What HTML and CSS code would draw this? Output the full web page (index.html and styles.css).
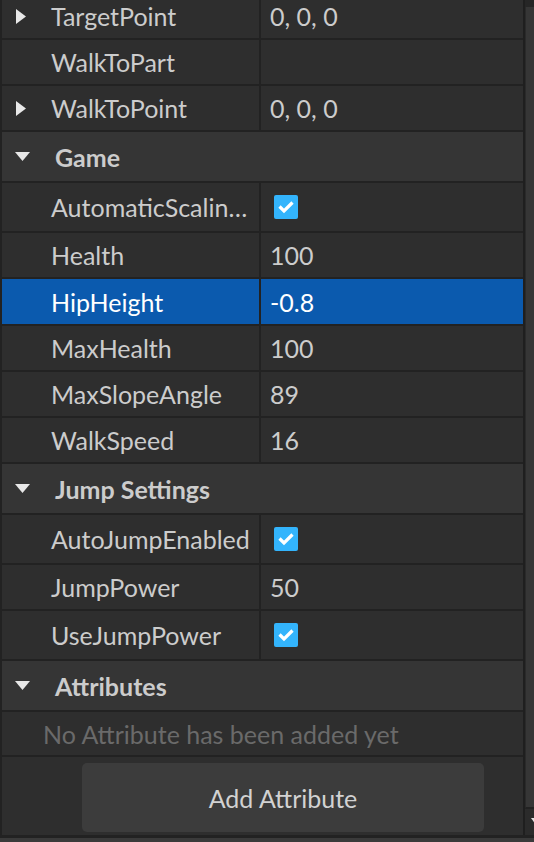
FILE: index.html
```html
<!DOCTYPE html>
<html>
<head>
<meta charset="utf-8">
<link rel="stylesheet" href="styles.css">
</head>
<body>
<div class="frame">
  <div class="main">
    <div class="list">
      <div class="row">
        <div class="name"><span class="expander"><svg width="10" height="15" viewBox="0 0 10 15"><polygon points="0,0 10,7.5 0,15" fill="#e8e8e8"/></svg></span>TargetPoint</div>
        <div class="value">0, 0, 0</div>
      </div>
      <div class="row">
        <div class="name"><span class="expander"></span>WalkToPart</div>
        <div class="value"></div>
      </div>
      <div class="row">
        <div class="name"><span class="expander"><svg width="10" height="15" viewBox="0 0 10 15"><polygon points="0,0 10,7.5 0,15" fill="#e8e8e8"/></svg></span>WalkToPoint</div>
        <div class="value">0, 0, 0</div>
      </div>

      <div class="header">
        <span class="caret"><svg width="15" height="9" viewBox="0 0 15 9"><polygon points="0,0 15,0 7.5,9" fill="#e8e8e8"/></svg></span>Game
      </div>
      <div class="row tall">
        <div class="name"><span class="expander"></span>AutomaticScalin…</div>
        <div class="value"><span class="check"><svg width="24" height="24" viewBox="0 0 24 24"><rect x="0" y="0" width="24" height="24" rx="2" fill="#33b4fc"/><polyline points="5.5,11.5 10,16 18.5,7.5" fill="none" stroke="#ffffff" stroke-width="3.2"/></svg></span></div>
      </div>
      <div class="row">
        <div class="name"><span class="expander"></span>Health</div>
        <div class="value">100</div>
      </div>
      <div class="row selected">
        <div class="name"><span class="expander"></span>HipHeight</div>
        <div class="value">-0.8</div>
      </div>
      <div class="row">
        <div class="name"><span class="expander"></span>MaxHealth</div>
        <div class="value">100</div>
      </div>
      <div class="row">
        <div class="name"><span class="expander"></span>MaxSlopeAngle</div>
        <div class="value">89</div>
      </div>
      <div class="row">
        <div class="name"><span class="expander"></span>WalkSpeed</div>
        <div class="value">16</div>
      </div>

      <div class="header">
        <span class="caret"><svg width="15" height="9" viewBox="0 0 15 9"><polygon points="0,0 15,0 7.5,9" fill="#e8e8e8"/></svg></span>Jump Settings
      </div>
      <div class="row tall">
        <div class="name"><span class="expander"></span>AutoJumpEnabled</div>
        <div class="value"><span class="check"><svg width="24" height="24" viewBox="0 0 24 24"><rect x="0" y="0" width="24" height="24" rx="2" fill="#33b4fc"/><polyline points="5.5,11.5 10,16 18.5,7.5" fill="none" stroke="#ffffff" stroke-width="3.2"/></svg></span></div>
      </div>
      <div class="row">
        <div class="name"><span class="expander"></span>JumpPower</div>
        <div class="value">50</div>
      </div>
      <div class="row tall">
        <div class="name"><span class="expander"></span>UseJumpPower</div>
        <div class="value"><span class="check"><svg width="24" height="24" viewBox="0 0 24 24"><rect x="0" y="0" width="24" height="24" rx="2" fill="#33b4fc"/><polyline points="5.5,11.5 10,16 18.5,7.5" fill="none" stroke="#ffffff" stroke-width="3.2"/></svg></span></div>
      </div>

      <div class="header">
        <span class="caret"><svg width="15" height="9" viewBox="0 0 15 9"><polygon points="0,0 15,0 7.5,9" fill="#e8e8e8"/></svg></span>Attributes
      </div>
      <div class="empty">No Attribute has been added yet</div>
      <div class="actions">
        <div class="button">Add Attribute</div>
      </div>
    </div>
  </div>
  <div class="scrollbar">
    <div class="sb-top"></div>
    <div class="sb-thumb"></div>
    <div class="sb-arrow"><svg width="10" height="8" viewBox="0 0 10 8"><polygon points="0,0 10,0 5,7" fill="#e0e0e0"/></svg></div>
  </div>
</div>
<div class="footer"></div>
</body>
</html>
```
FILE: styles.css
```css
html, body {
  margin: 0;
  padding: 0;
  background: #2e2e2e;
}
body {
  width: 534px;
  height: 842px;
  overflow: hidden;
  font-family: Lato, "Liberation Sans", sans-serif;
  font-size: 25px;
  color: #cccccc;
  display: flex;
  flex-direction: column;
}
.frame {
  display: flex;
  height: 835px;
  overflow: hidden;
}
.main {
  width: 521px;
  border-left: 2px solid #222222;
  overflow: hidden;
}
.list {
  margin-top: -6px;
  display: flex;
  flex-direction: column;
}
.row {
  display: flex;
  height: 44px;
  border-bottom: 2px solid #222222;
  background: #2e2e2e;
}
.row.tall {
  height: 48px;
}
.row.selected {
  background: #0b5aae;
  color: #ffffff;
  height: 45px;
}
.name {
  width: 257px;
  border-right: 2px solid #222222;
  display: flex;
  align-items: center;
  white-space: nowrap;
  overflow: hidden;
}
.expander {
  width: 49px;
  flex: none;
  display: flex;
  align-items: center;
  padding-left: 14px;
  box-sizing: border-box;
}
.expander svg {
  display: block;
}
.value {
  flex: 1;
  display: flex;
  align-items: center;
  padding-left: 9px;
}
.check svg {
  display: block;
  margin-left: 4px;
}
.header {
  height: 49px;
  border-bottom: 2px solid #222222;
  background: #353535;
  display: flex;
  align-items: center;
  font-weight: bold;
  color: #cccccc;
}
.caret {
  width: 53px;
  flex: none;
  padding-left: 13px;
  box-sizing: border-box;
  display: flex;
  align-items: center;
}
.caret svg {
  display: block;
}
.empty {
  height: 43px;
  border-bottom: 2px solid #222222;
  display: flex;
  align-items: center;
  padding-left: 41px;
  color: #6a6a6a;
}
.actions {
  padding: 6px 0 2px 80px;
}
.button {
  width: 402px;
  height: 69px;
  border-radius: 5px;
  background: #3c3c3c;
  color: #d2d2d2;
  display: flex;
  align-items: center;
  justify-content: center;
}
.scrollbar {
  width: 9px;
  border-left: 2px solid #1f1f1f;
  display: flex;
  flex-direction: column;
  background: #2b2b2b;
}
.sb-top {
  height: 7px;
  background: #262626;
}
.sb-thumb {
  flex: 1;
  background: #363636;
  border-left: 1px solid #2a2a2a;
  border-bottom: 2px solid #222222;
}
.sb-arrow {
  height: 26px;
  display: flex;
  align-items: center;
  padding-left: 6px;
  overflow: hidden;
}
.sb-arrow svg {
  display: block;
  flex: none;
}
.footer {
  height: 7px;
  border-top: 3px solid #222222;
  background: #3a3a3a;
  box-sizing: border-box;
}
```
